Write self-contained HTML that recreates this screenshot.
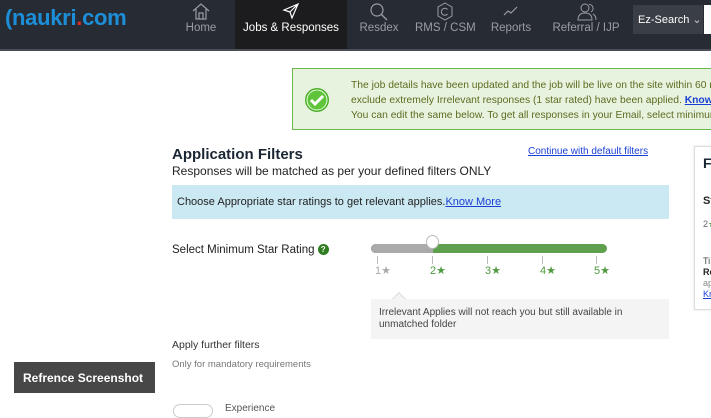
<!DOCTYPE html>
<html><head><meta charset="utf-8"><style>
*{margin:0;padding:0;box-sizing:border-box}
body{width:711px;height:408px;overflow:hidden;background:#fff;font-family:"Liberation Sans",Arial,sans-serif;position:relative}
.hdr{position:absolute;left:0;top:0;width:711px;height:51px;background:#272b34;border-bottom:2px solid #4a4d55}
.abs{position:absolute}
.nav{position:absolute;top:0;height:49px;color:#9a9ca2;font-size:11.5px;text-align:center}
.nav span{position:absolute;top:22px;left:0;right:0;white-space:nowrap}
.nav svg{position:absolute;top:2px;left:50%;margin-left:-10px}
.green{position:absolute;left:292px;top:68px;width:430px;height:62px;background:#e8f3df;border:1px solid #6cb84a}
.green p{position:absolute;left:58px;font-size:10.3px;color:#5c6a1f;white-space:nowrap}
a{color:#1a3fd6;text-decoration:underline}
.st{position:absolute;top:264px;font-size:11px}
</style></head><body>
<div class="hdr">
 <div class="abs" style="left:5px;top:5px;font-size:22px;font-weight:bold;color:#1d8fd8;letter-spacing:-0.3px"><span style="color:#1d8fd8">(</span>naukri<span style="color:#e02b27">.</span>com</div>
 <div class="nav" style="left:180px;width:42px"><svg width="20" height="18" viewBox="0 0 20 18"><path d="M2 9L10 2L18 9M5 7V17H15V7M8 17V11H12V17" fill="none" stroke="#9a9ca2" stroke-width="1.2"/></svg><span>Home</span></div>
 <div class="nav" style="left:235px;width:112px;background:#1c1c1e;color:#fff"><svg width="20" height="18" viewBox="0 0 20 18"><path d="M17 2L3 8L9 10L11 16Z M9 10L17 2" fill="none" stroke="#fff" stroke-width="1.2"/></svg><span>Jobs &amp; Responses</span></div>
 <div class="nav" style="left:357px;width:44px"><svg width="20" height="20" viewBox="0 0 20 20"><circle cx="8" cy="8" r="6" fill="none" stroke="#9a9ca2" stroke-width="1.2"/><path d="M12.5 12.5L18 18" stroke="#9a9ca2" stroke-width="1.3"/></svg><span>Resdex</span></div>
 <div class="nav" style="left:415px;width:60px"><svg width="20" height="20" viewBox="0 0 20 20"><path d="M10 1L17 5V14L10 18L3 14V5Z" fill="none" stroke="#9a9ca2"/><path d="M12.5 7.5A3.5 3.5 0 1 0 12.5 12" fill="none" stroke="#9a9ca2"/></svg><span>RMS / CSM</span></div>
 <div class="nav" style="left:490px;width:42px"><svg width="20" height="18" viewBox="0 0 20 18"><path d="M3 13L7 9L10 11L16 5" fill="none" stroke="#9a9ca2" stroke-width="1.2"/></svg><span>Reports</span></div>
 <div class="nav" style="left:550px;width:72px"><svg width="22" height="20" viewBox="0 0 22 20"><circle cx="9" cy="6" r="4" fill="none" stroke="#9a9ca2"/><path d="M2 18C2 13 5 11 9 11S16 13 16 18Z" fill="none" stroke="#9a9ca2"/><path d="M13 2.5A4 4 0 0 1 15 10M17 12C19 13 20 15 20 18" fill="none" stroke="#9a9ca2"/></svg><span>Referral / IJP</span></div>
 <div class="abs" style="left:633px;top:5px;width:70px;height:29px;background:#3a3e47;color:#fff;font-size:11px;padding:8px 0 0 5px">Ez-Search <span style="color:#ccc">&#8964;</span></div>
 <div class="abs" style="left:704px;top:5px;width:10px;height:29px;background:#fff"></div>
</div>
<div class="green">
 <svg class="abs" style="left:11px;top:18px" width="26" height="26" viewBox="0 0 26 26"><circle cx="13" cy="13" r="12" fill="#4caf2a"/><circle cx="13" cy="13" r="10" fill="#5fc43a" stroke="#e8ffe0" stroke-width="1"/><path d="M7 13L11 17L19 9" fill="none" stroke="#fff" stroke-width="3"/></svg>
 <p style="top:11px">The job details have been updated and the job will be live on the site within 60 minutes</p>
 <p style="top:26px">exclude extremely Irrelevant responses (1 star rated) have been applied. <a style="font-weight:bold">Know more</a></p>
 <p style="top:41px">You can edit the same below. To get all responses in your Email, select minimum star</p>
</div>
<div class="abs" style="left:172px;top:146px;font-size:15px;font-weight:bold;color:#1b2634">Application Filters</div>
<div class="abs" style="left:172px;top:164px;font-size:12px;color:#222">Responses will be matched as per your defined filters ONLY</div>
<a class="abs" style="left:528px;top:146px;font-size:10px">Continue with default filters</a>
<div class="abs" style="left:172px;top:185px;width:497px;height:34px;background:#cbe9f3;font-size:11px;color:#222;padding:11px 0 0 5px">Choose Appropriate star ratings to get relevant applies.<a>Know More</a></div>
<div class="abs" style="left:172px;top:244px;font-size:11.5px;color:#222">Select Minimum Star Rating <span style="display:inline-block;width:11px;height:11px;border-radius:50%;background:#2e7d1f;color:#fff;font-size:8px;font-weight:bold;text-align:center;line-height:11px;vertical-align:middle">?</span></div>
<div class="abs" style="left:371px;top:244px;width:236px;height:9px;border-radius:5px;background:#5ea04e"></div>
<div class="abs" style="left:371px;top:244px;width:62px;height:9px;border-radius:5px 0 0 5px;background:#aaa"></div>
<div class="abs" style="left:426px;top:235px;width:13px;height:14px;border-radius:50%;background:#fff;border:1px solid #bbb"></div>
<div class="abs" style="left:377px;top:256px;width:1px;height:8px;background:#bbb"></div>
<div class="abs" style="left:432px;top:256px;width:1px;height:8px;background:#bbb"></div>
<div class="abs" style="left:487px;top:256px;width:1px;height:8px;background:#bbb"></div>
<div class="abs" style="left:542px;top:256px;width:1px;height:8px;background:#bbb"></div>
<div class="abs" style="left:596px;top:256px;width:1px;height:8px;background:#bbb"></div>
<div class="st" style="left:375px;color:#aaa">1★</div>
<div class="st" style="left:430px;color:#4f9a3f">2★</div>
<div class="st" style="left:485px;color:#4f9a3f">3★</div>
<div class="st" style="left:540px;color:#4f9a3f">4★</div>
<div class="st" style="left:594px;color:#4f9a3f">5★</div>
<div class="abs" style="left:394px;top:294px;width:10px;height:10px;background:#f4f4f4;border-left:1px solid #ddd;border-top:1px solid #ddd;transform:rotate(45deg)"></div>
<div class="abs" style="left:371px;top:299px;width:298px;height:40px;background:#f4f4f4;font-size:10px;color:#444;padding:8px 0 0 8px;line-height:12px">Irrelevant Applies will not reach you but still available in<br>unmatched folder</div>
<div class="abs" style="left:172px;top:339px;font-size:10.5px;color:#333">Apply further filters</div>
<div class="abs" style="left:172px;top:359px;font-size:9.5px;color:#777">Only for mandatory requirements</div>
<div class="abs" style="left:173px;top:404px;width:40px;height:14px;border:1px solid #ccc;border-radius:8px"></div>
<div class="abs" style="left:225px;top:403px;font-size:10px;color:#555">Experience</div>
<div class="abs" style="left:14px;top:362px;width:141px;height:31px;background:#474747;color:#fff;font-size:12px;font-weight:bold;padding:9px 0 0 9px">Refrence Screenshot</div>
<div class="abs" style="left:694px;top:146px;width:30px;height:164px;border:1px solid #ddd;border-right:none;box-shadow:0 0 2px #ddd"></div>
<div class="abs" style="left:703px;top:155px;font-size:14px;font-weight:bold;color:#1b2634">F</div>
<div class="abs" style="left:703px;top:195px;font-size:11px;font-weight:bold;color:#222">St</div>
<div class="abs" style="left:703px;top:219px;font-size:9px;color:#666">2<span style="color:#4f9a3f">★</span></div>
<div class="abs" style="left:703px;top:256px;font-size:9px;color:#444;line-height:11px">Ti<br><b style="color:#222">Re</b><br><span style="color:#888">ap</span><br><a>Kn</a></div>
</body></html>
